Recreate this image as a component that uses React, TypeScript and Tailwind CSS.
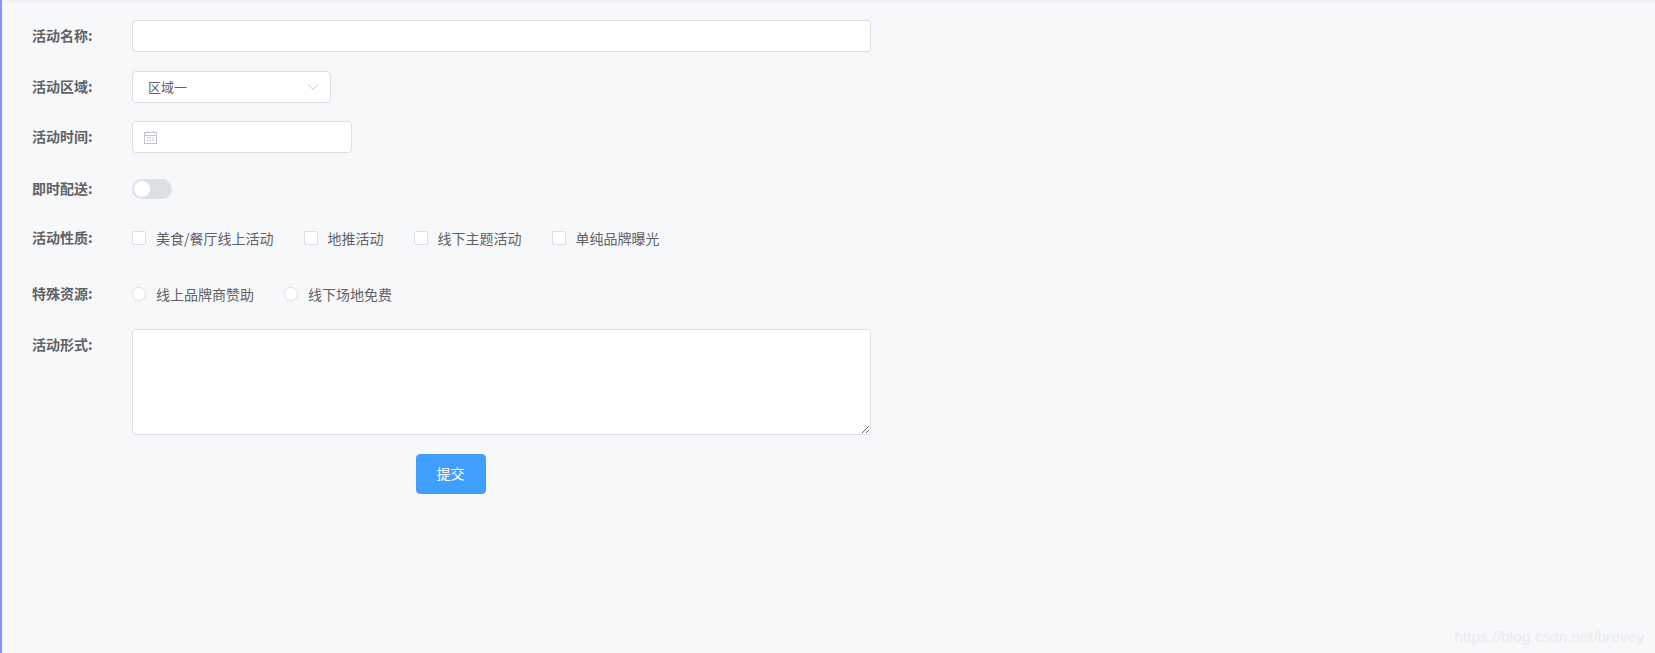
import React from "react";

const font = "font-['Noto_Sans_CJK_SC','Liberation_Sans',sans-serif]";

const FormRow = ({
  label,
  className,
  alignTop,
  children,
}: {
  label: string;
  className?: string;
  alignTop?: boolean;
  children: React.ReactNode;
}) => (
  <div className={`flex ${alignTop ? "items-start" : "items-center"} ${className ?? ""}`}>
    <label className="w-[100px] h-8 leading-[30px] shrink-0 text-sm font-bold text-[#606266]">{label}</label>
    {children}
  </div>
);

const CheckItem = ({ label, round }: { label: string; round?: boolean }) => (
  <label className="flex items-center gap-[10px] h-[14px] text-sm text-[#606266]">
    <span
      className={`w-[14px] h-[14px] bg-white border border-[#dcdfe6] ${round ? "rounded-full" : "rounded-[2px]"}`}
    />
    <span className="leading-[12px]">{label}</span>
  </label>
);

const App = () => {
  return (
    <div className={`relative h-screen overflow-hidden bg-[#f7f8fa] border-l-2 border-[#8492fd] ${font}`}>
      <div className="absolute inset-x-0 top-0 h-1 bg-gradient-to-b from-[#eff0f3] to-[#f7f8fa]" />
      <form className="relative flex flex-col w-[869px] pt-5 pl-[30px]">
        <FormRow label="活动名称:">
          <input className="w-[739px] h-8 bg-white border border-[#dcdfe6] rounded px-[15px] outline-none" />
        </FormRow>
        <FormRow label="活动区域:" className="mt-[19px]">
          <div className="flex items-center justify-between w-[199px] h-8 bg-white border border-[#dcdfe6] rounded pl-[15px] pr-[11px] text-[13px] text-[#606266]">
            区域一
            <svg width="12" height="12" viewBox="0 0 12 12" fill="none" stroke="#c0c4cc" strokeWidth="1">
              <path d="M1 3.5 L6 8.5 L11 3.5" />
            </svg>
          </div>
        </FormRow>
        <FormRow label="活动时间:" className="mt-[18px]">
          <div className="flex items-center w-[220px] h-8 bg-white border border-[#dcdfe6] rounded pl-[11px]">
            <svg width="13" height="13" viewBox="0 0 13 13" fill="none" stroke="#c0c4cc" strokeWidth="1">
              <rect x="0.5" y="1.5" width="12" height="11" />
              <path d="M0.5 4.5 H12.5 M3.5 0 V2 M9.5 0 V2" />
              <path d="M2.5 7 H10.5 M2.5 9.5 H10.5" strokeDasharray="2 0.7" />
            </svg>
          </div>
        </FormRow>
        <FormRow label="即时配送:" className="mt-5">
          <div className="flex items-center w-10 h-5 rounded-full bg-[#dcdfe6] pl-[2px]">
            <span className="w-4 h-4 rounded-full bg-white" />
          </div>
        </FormRow>
        <FormRow label="活动性质:" className="mt-[17px]">
          <div className="flex gap-[30px]">
            <CheckItem label="美食/餐厅线上活动" />
            <CheckItem label="地推活动" />
            <CheckItem label="线下主题活动" />
            <CheckItem label="单纯品牌曝光" />
          </div>
        </FormRow>
        <FormRow label="特殊资源:" className="mt-6">
          <div className="flex gap-[30px]">
            <CheckItem round label="线上品牌商赞助" />
            <CheckItem round label="线下场地免费" />
          </div>
        </FormRow>
        <FormRow label="活动形式:" alignTop className="mt-[19px]">
          <textarea className="block w-[739px] h-[106px] bg-white border border-[#dcdfe6] rounded px-[15px] py-[5px] outline-none resize-y" />
        </FormRow>
        <div className="flex justify-center pr-[2px] mt-[19px]">
          <button
            type="button"
            className="w-[70px] h-10 rounded bg-[#409eff] border border-[#409eff] text-sm leading-[34px] pb-[2px] text-white"
          >
            提交
          </button>
        </div>
      </form>
      <div className="absolute right-[11px] bottom-[6px] text-[15.5px] leading-5 text-[#e9ebee] font-['Liberation_Sans',sans-serif]">
        https://blog.csdn.net/brevey
      </div>
    </div>
  );
};

export default App;
